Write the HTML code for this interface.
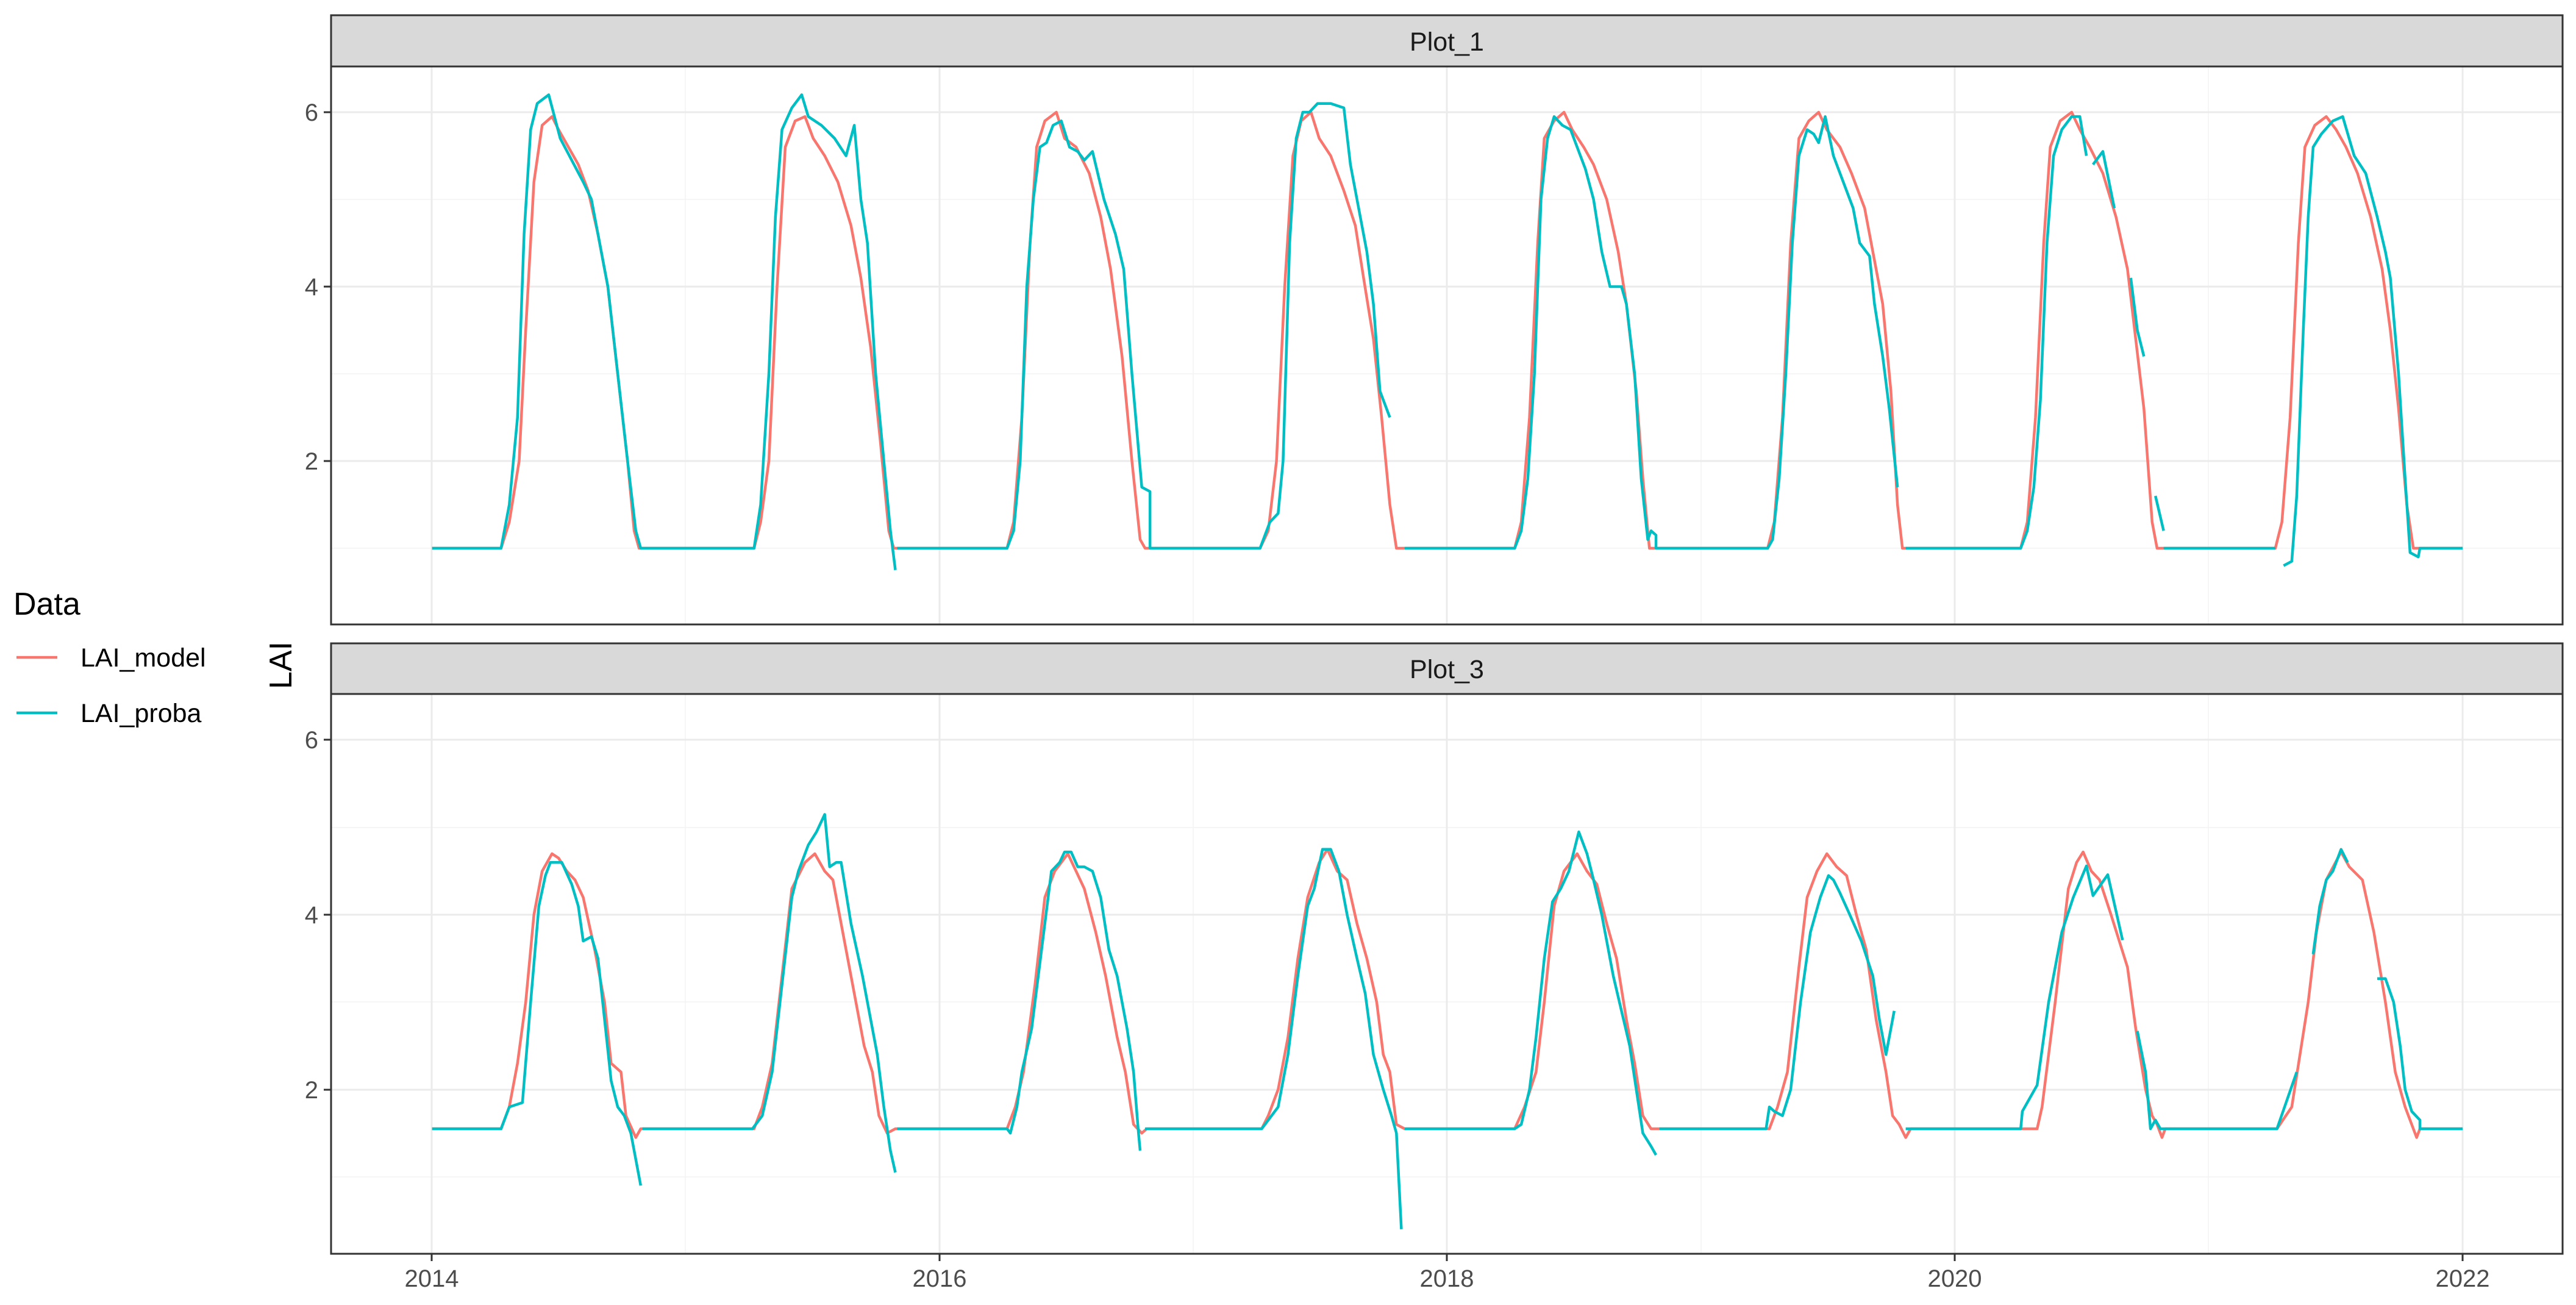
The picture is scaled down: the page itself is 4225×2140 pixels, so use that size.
<!DOCTYPE html>
<html><head><meta charset="utf-8"><style>html,body{margin:0;padding:0;background:#fff}svg{display:block}</style></head>
<body>
<svg width="4225" height="2140" viewBox="0 0 4225 2140" xmlns="http://www.w3.org/2000/svg" font-family="Liberation Sans, sans-serif">
<rect width="4225" height="2140" fill="#fff"/>
<g stroke="#f3f3f3" stroke-width="1.6">
<line x1="543" x2="4203" y1="899" y2="899"/><line x1="543" x2="4203" y1="613" y2="613"/><line x1="543" x2="4203" y1="327" y2="327"/>
<line x1="1124" x2="1124" y1="109" y2="1024"/><line x1="1957" x2="1957" y1="109" y2="1024"/><line x1="2790" x2="2790" y1="109" y2="1024"/><line x1="3622" x2="3622" y1="109" y2="1024"/>
<line x1="543" x2="4203" y1="1930" y2="1930"/><line x1="543" x2="4203" y1="1643" y2="1643"/><line x1="543" x2="4203" y1="1357" y2="1357"/>
<line x1="1124" x2="1124" y1="1138" y2="2056"/><line x1="1957" x2="1957" y1="1138" y2="2056"/><line x1="2790" x2="2790" y1="1138" y2="2056"/><line x1="3622" x2="3622" y1="1138" y2="2056"/>
</g>
<g stroke="#ebebeb" stroke-width="3">
<line x1="543" x2="4203" y1="756" y2="756"/><line x1="543" x2="4203" y1="470" y2="470"/><line x1="543" x2="4203" y1="184" y2="184"/>
<line x1="708" x2="708" y1="109" y2="1024"/><line x1="1541" x2="1541" y1="109" y2="1024"/><line x1="2373" x2="2373" y1="109" y2="1024"/><line x1="3206" x2="3206" y1="109" y2="1024"/><line x1="4039" x2="4039" y1="109" y2="1024"/>
<line x1="543" x2="4203" y1="1787" y2="1787"/><line x1="543" x2="4203" y1="1500" y2="1500"/><line x1="543" x2="4203" y1="1213" y2="1213"/>
<line x1="708" x2="708" y1="1138" y2="2056"/><line x1="1541" x2="1541" y1="1138" y2="2056"/><line x1="2373" x2="2373" y1="1138" y2="2056"/><line x1="3206" x2="3206" y1="1138" y2="2056"/><line x1="4039" x2="4039" y1="1138" y2="2056"/>
</g>
<g transform="translate(0,1042) scale(2.6945,-143)" fill="none" stroke-linejoin="round">
<path vector-effect="non-scaling-stroke" stroke="#F8766D" stroke-width="4.5" d="M263,1 L305,1 L310,1.3 L316,2 L320,3.5 L325,5.2 L330,5.85 L336,5.95 L340,5.8 L346,5.6 L352,5.4 L358,5.1 L364,4.6 L370,4 L376,3 L382,2 L386,1.2 L389,1 L459,1 L463,1.3 L468,2 L473,4 L478,5.6 L484,5.9 L490,5.95 L495,5.7 L502,5.5 L510,5.2 L518,4.7 L524,4.1 L530,3.3 L536,2.2 L541,1.2 L544,1 L613,1 L617,1.3 L622,2.5 L627,4.5 L631,5.6 L636,5.9 L643,6 L648,5.7 L655,5.6 L663,5.3 L670,4.8 L676,4.2 L683,3.2 L689,2 L694,1.1 L697,1 L767,1 L772,1.2 L777,2 L782,4 L787,5.5 L792,5.9 L798,6 L803,5.7 L810,5.5 L818,5.1 L825,4.7 L830,4.1 L836,3.4 L841,2.5 L846,1.5 L850,1 L922,1 L926,1.3 L931,2.5 L936,4.5 L940,5.7 L946,5.9 L952,6 L957,5.8 L964,5.6 L970,5.4 L978,5 L985,4.4 L990,3.8 L996,2.8 L1000,1.8 L1004,1 L1076,1 L1080,1.3 L1085,2.5 L1090,4.5 L1095,5.7 L1101,5.9 L1107,6 L1112,5.8 L1120,5.6 L1127,5.3 L1135,4.9 L1140,4.4 L1146,3.8 L1151,2.8 L1155,1.5 L1158,1 L1230,1 L1234,1.3 L1239,2.5 L1244,4.5 L1248,5.6 L1254,5.9 L1261,6 L1266,5.8 L1272,5.6 L1280,5.3 L1288,4.8 L1295,4.2 L1300,3.4 L1305,2.6 L1310,1.3 L1313,1 L1385,1 L1389,1.3 L1394,2.5 L1399,4.5 L1403,5.6 L1409,5.85 L1416,5.95 L1422,5.8 L1428,5.6 L1435,5.3 L1443,4.8 L1450,4.2 L1455,3.5 L1460,2.6 L1465,1.5 L1469,1 L1499,1"/>
<path vector-effect="non-scaling-stroke" stroke="#00BFC4" stroke-width="4.5" d="M263,1 L305,1 L310,1.5 L315,2.5 L319,4.6 L323,5.8 L327,6.1 L334,6.2 L341,5.7 L348,5.45 L355,5.2 L360,5.0 L364,4.6 L370,4 L376,3 L382,2 L387,1.2 L390,1 L459,1 L463,1.5 L468,3 L472,4.8 L476,5.8 L482,6.05 L488,6.2 L492,5.95 L500,5.85 L508,5.7 L515,5.5 L520,5.85 L524,5.0 L528,4.5 L533,3 L538,2 L542,1.2 L545,0.75 M546,1 L613,1 L617,1.2 L621,2 L625,4 L629,5.0 L633,5.6 L637,5.65 L641,5.85 L646,5.9 L651,5.6 L656,5.55 L660,5.45 L665,5.55 L672,5 L679,4.6 L684,4.2 L689,3 L695,1.7 L700,1.65 L700,1 L767,1 L773,1.3 L778,1.4 L781,2 L785,4.5 L789,5.7 L793,6 L797,6 L802,6.1 L810,6.1 L818,6.05 L822,5.4 L826,5 L832,4.4 L836,3.8 L840,2.8 L843,2.65 L846,2.5 M855,1 L922,1 L926,1.2 L930,1.8 L934,3 L938,5 L942,5.7 L946,5.95 L951,5.85 L956,5.8 L960,5.6 L965,5.35 L970,5 L975,4.4 L980,4 L987,4 L990,3.8 L995,3 L999,1.8 L1003,1.1 L1005,1.2 L1008,1.15 L1008,1 L1076,1 L1079,1.1 L1083,1.8 L1087,3 L1091,4.5 L1095,5.5 L1100,5.8 L1104,5.75 L1107,5.65 L1111,5.95 L1116,5.5 L1122,5.2 L1128,4.9 L1132,4.5 L1138,4.35 L1141,3.8 L1146,3.2 L1150,2.6 L1155,1.7 M1160,1 L1230,1 L1234,1.2 L1238,1.7 L1242,2.7 L1246,4.5 L1250,5.5 L1255,5.8 L1261,5.95 L1266,5.95 L1270,5.5 M1274,5.4 L1280,5.55 L1287,4.9 M1297,4.1 L1301,3.5 L1305,3.2 M1312,1.6 L1317,1.2 M1317,1 L1385,1 M1390,0.8 L1395,0.85 L1398,1.6 L1402,3.5 L1405,4.8 L1408,5.6 L1413,5.75 L1420,5.9 L1426,5.95 L1433,5.5 L1440,5.3 L1447,4.8 L1452,4.4 L1455,4.1 L1460,3 L1464,1.8 L1467,0.95 L1472,0.9 L1473,1 L1499,1"/>
</g>
<g transform="translate(0,2073) scale(2.6945,-143.2)" fill="none" stroke-linejoin="round">
<path vector-effect="non-scaling-stroke" stroke="#F8766D" stroke-width="4.5" d="M263,1.55 L305,1.55 L310,1.8 L315,2.3 L320,3 L325,4 L330,4.5 L336,4.7 L340,4.65 L345,4.5 L350,4.4 L355,4.2 L362,3.6 L368,3.0 L372,2.3 L378,2.2 L381,1.7 L387,1.45 L390,1.55 L459,1.55 L464,1.8 L470,2.3 L476,3.3 L482,4.3 L490,4.6 L496,4.7 L502,4.5 L507,4.4 L514,3.7 L520,3.1 L526,2.5 L531,2.2 L535,1.7 L540,1.5 L545,1.55 L613,1.55 L618,1.8 L623,2.2 L630,3.2 L636,4.2 L642,4.5 L650,4.7 L655,4.5 L660,4.3 L667,3.8 L673,3.3 L680,2.6 L685,2.2 L690,1.6 L695,1.5 L698,1.55 L768,1.55 L772,1.7 L778,2 L784,2.6 L790,3.5 L796,4.2 L803,4.6 L808,4.75 L814,4.5 L820,4.4 L826,3.9 L832,3.5 L838,3 L842,2.4 L846,2.2 L850,1.6 L855,1.55 L922,1.55 L928,1.8 L935,2.2 L940,3 L946,4.1 L952,4.5 L960,4.7 L966,4.5 L972,4.35 L978,3.9 L984,3.5 L990,2.8 L995,2.3 L1000,1.7 L1005,1.55 L1077,1.55 L1082,1.8 L1088,2.2 L1095,3.4 L1100,4.2 L1106,4.5 L1112,4.7 L1118,4.55 L1124,4.45 L1130,4 L1136,3.6 L1142,2.8 L1148,2.2 L1152,1.7 L1156,1.6 L1160,1.45 L1163,1.55 L1240,1.55 L1243,1.8 L1251,3 L1259,4.3 L1264,4.6 L1268,4.72 L1273,4.5 L1278,4.4 L1285,4.0 L1295,3.4 L1300,2.7 L1306,2.0 L1310,1.7 L1313,1.6 L1316,1.45 L1318,1.55 L1386,1.55 L1395,1.8 L1405,3.0 L1410,3.8 L1416,4.4 L1425,4.72 L1430,4.55 L1438,4.4 L1445,3.8 L1452,3.0 L1458,2.2 L1464,1.8 L1468,1.6 L1471,1.45 L1473,1.55 L1499,1.55"/>
<path vector-effect="non-scaling-stroke" stroke="#00BFC4" stroke-width="4.5" d="M263,1.55 L305,1.55 L310,1.8 L318,1.85 L323,3 L328,4.1 L332,4.45 L335,4.6 L342,4.6 L348,4.35 L352,4.1 L355,3.7 L360,3.75 L364,3.5 L368,2.8 L372,2.1 L376,1.8 L380,1.7 L384,1.5 L387,1.2 L390,0.9 M391,1.55 L458,1.55 L464,1.7 L470,2.2 L476,3.2 L482,4.2 L486,4.5 L492,4.8 L497,4.95 L502,5.15 L505,4.55 L509,4.6 L512,4.6 L518,3.9 L525,3.3 L530,2.8 L534,2.4 L538,1.8 L542,1.3 L545,1.05 M546,1.55 L613,1.55 L615,1.5 L619,1.8 L622,2.2 L628,2.7 L634,3.6 L640,4.5 L645,4.6 L648,4.72 L652,4.72 L656,4.55 L660,4.55 L665,4.5 L670,4.2 L675,3.6 L680,3.3 L686,2.7 L690,2.2 L693,1.5 L694,1.3 M697,1.55 L768,1.55 L772,1.65 L778,1.8 L784,2.4 L790,3.3 L796,4.1 L800,4.3 L805,4.75 L810,4.75 L815,4.5 L820,4.0 L826,3.5 L831,3.1 L836,2.4 L842,2.0 L847,1.7 L850,1.5 L853,0.4 M855,1.55 L922,1.55 L926,1.6 L931,2.0 L935,2.6 L940,3.5 L945,4.15 L950,4.3 L955,4.5 L961,4.95 L966,4.7 L970,4.4 L975,4.0 L982,3.3 L987,2.9 L992,2.5 L996,2.0 L1000,1.5 L1005,1.35 L1008,1.25 M1010,1.55 L1075,1.55 L1077,1.8 L1080,1.75 L1085,1.7 L1090,2 L1096,3.0 L1102,3.8 L1108,4.2 L1113,4.45 L1116,4.4 L1120,4.25 L1126,4.0 L1133,3.7 L1140,3.3 L1144,2.8 L1148,2.4 L1153,2.9 M1160,1.55 L1230,1.55 L1231,1.75 L1240,2.05 L1247,3 L1255,3.8 L1262,4.2 L1270,4.56 L1274,4.22 L1283,4.46 L1292,3.71 M1301,2.67 L1306,2.2 L1309,1.55 L1312,1.65 L1315,1.55 L1386,1.55 L1398,2.2 M1408,3.55 L1412,4.1 L1416,4.4 L1420,4.5 L1425,4.75 L1429,4.6 M1447,3.27 L1452,3.27 L1457,3.0 L1461,2.5 L1464,2.0 L1468,1.75 L1473,1.65 L1473,1.55 L1499,1.55"/>
</g>
<rect x="543" y="25" width="3660" height="84" fill="#d9d9d9" stroke="#333" stroke-width="3"/>
<rect x="543" y="109" width="3660" height="915" fill="none" stroke="#333" stroke-width="3"/>
<rect x="543" y="1055" width="3660" height="83" fill="#d9d9d9" stroke="#333" stroke-width="3"/>
<rect x="543" y="1138" width="3660" height="918" fill="none" stroke="#333" stroke-width="3"/>
<g font-size="43" fill="#1a1a1a" text-anchor="middle">
<text x="2373" y="83">Plot_1</text>
<text x="2373" y="1112">Plot_3</text>
</g>
<g stroke="#333" stroke-width="3">
<line x1="531" x2="543" y1="756" y2="756"/><line x1="531" x2="543" y1="470" y2="470"/><line x1="531" x2="543" y1="184" y2="184"/>
<line x1="531" x2="543" y1="1787" y2="1787"/><line x1="531" x2="543" y1="1500" y2="1500"/><line x1="531" x2="543" y1="1213" y2="1213"/>
<line x1="708" x2="708" y1="2056" y2="2068"/><line x1="1541" x2="1541" y1="2056" y2="2068"/><line x1="2373" x2="2373" y1="2056" y2="2068"/><line x1="3206" x2="3206" y1="2056" y2="2068"/><line x1="4039" x2="4039" y1="2056" y2="2068"/>
</g>
<g font-size="40" fill="#4d4d4d" text-anchor="end">
<text x="522" y="770">2</text><text x="522" y="484">4</text><text x="522" y="198">6</text>
<text x="522" y="1801">2</text><text x="522" y="1514">4</text><text x="522" y="1227">6</text>
</g>
<g font-size="40" fill="#4d4d4d" text-anchor="middle">
<text x="708" y="2110">2014</text><text x="1541" y="2110">2016</text><text x="2373" y="2110">2018</text><text x="3206" y="2110">2020</text><text x="4039" y="2110">2022</text>
</g>
<text transform="translate(478,1091) rotate(-90)" font-size="52" text-anchor="middle" fill="#000">LAI</text>
<text x="22" y="1008" font-size="52" fill="#000">Data</text>
<line x1="27" x2="94" y1="1078" y2="1078" stroke="#F8766D" stroke-width="4.5"/>
<line x1="27" x2="94" y1="1169" y2="1169" stroke="#00BFC4" stroke-width="4.5"/>
<g font-size="43" fill="#000">
<text x="132" y="1093">LAI_model</text>
<text x="132" y="1184">LAI_proba</text>
</g>
</svg>
</body></html>
